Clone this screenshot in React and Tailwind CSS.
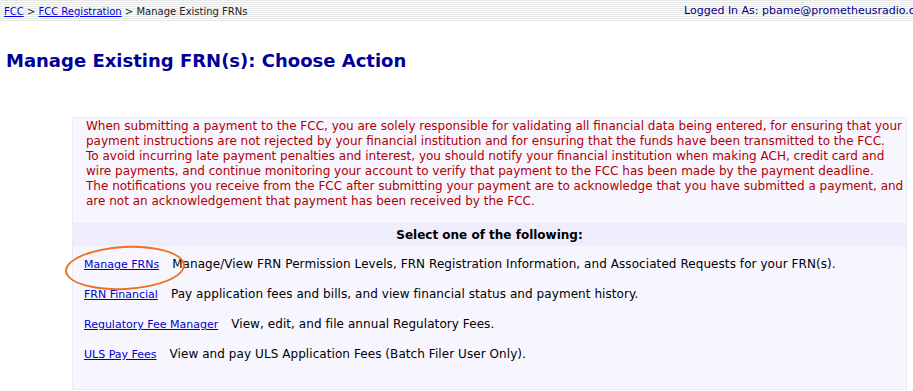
export default function App() {
  const items = [
    ["Manage FRNs", "Manage/View FRN Permission Levels, FRN Registration Information, and Associated Requests for your FRN(s)."],
    ["FRN Financial", "Pay application fees and bills, and view financial status and payment history."],
    ["Regulatory Fee Manager", "View, edit, and file annual Regulatory Fees."],
    ["ULS Pay Fees", "View and pay ULS Application Fees (Batch Filer User Only)."],
  ];
  return (
    <div className="w-[913px] h-[391px] overflow-hidden bg-white font-['DejaVu_Sans',Verdana,sans-serif]">
      <div className="h-[22px] flex items-center justify-between pl-[4px] bg-[repeating-linear-gradient(to_bottom,#e6e6e6_0px,#e6e6e6_1px,#ffffff_1px,#ffffff_2px)] text-[10px] whitespace-nowrap overflow-hidden">
        <div className="text-[#222]">
          <a className="text-[#0000ee] underline">FCC</a> &gt; <a className="text-[#0000ee] underline">FCC Registration</a> &gt; Manage Existing FRNs
        </div>
        <div className="text-[#00008b] text-[11px] w-[229px] shrink-0 overflow-hidden">Logged In As: pbame@prometheusradio.com</div>
      </div>
      <h1 className="mt-[28px] ml-[6px] text-[18px] font-bold text-[#000099] leading-[22px]">Manage Existing FRN(s): Choose Action</h1>
      <div className="ml-[72px] mt-[45px] w-[835px] h-[273px] bg-[#f7f6ff] border border-[#ebe9f8]">
        <div className="pl-[13px] pt-[1px] text-[12px] leading-[15px] text-[#b00000]">
          When submitting a payment to the FCC, you are solely responsible for validating all financial data being entered, for ensuring that your payment instructions are not rejected by your financial institution and for ensuring that the funds have been transmitted to the FCC.<br />
          To avoid incurring late payment penalties and interest, you should notify your financial institution when making ACH, credit card and wire payments, and continue monitoring your account to verify that payment to the FCC has been made by the payment deadline.<br />
          The notifications you receive from the FCC after submitting your payment are to acknowledge that you have submitted a payment, and are not an acknowledgement that payment has been received by the FCC.
        </div>
        <div className="mt-[14px] h-[23px] bg-[#efedfb] flex items-center justify-center text-[12px] font-bold text-black">Select one of the following:</div>
        <div className="pt-[10px] flex flex-col gap-[13px] text-[12px] tracking-[0.07px] text-black leading-[17px]">
          {items.map(([l, d], i) => (
            <div key={i} className="relative flex items-center pl-[11px]">
              {i === 0 && (
                <span className="absolute left-[-8px] top-[-10px] w-[120px] h-[44px] rounded-[50%] border-2 border-[#f07020] rotate-[-3deg]" />
              )}
              <a className="text-[#0000cc] underline text-[11px] tracking-normal mr-[13px]">{l}</a>
              <span>{d}</span>
            </div>
          ))}
        </div>
      </div>
    </div>
  );
}
